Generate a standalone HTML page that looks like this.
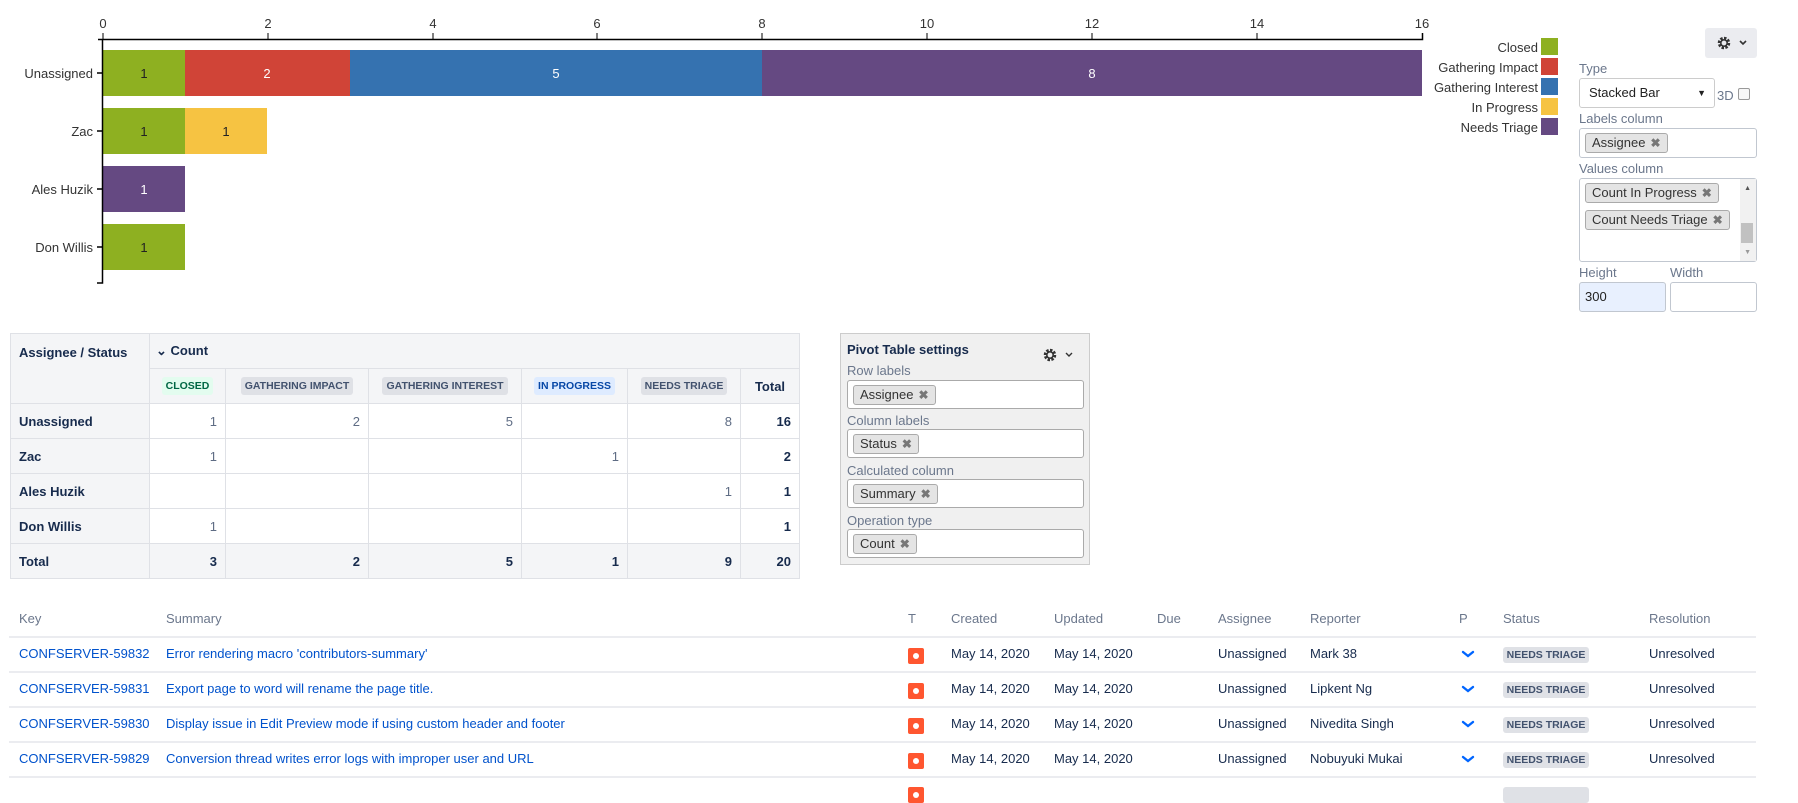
<!DOCTYPE html>
<html><head><meta charset="utf-8"><style>
*{box-sizing:border-box;margin:0;padding:0}
body{width:1798px;height:788px;overflow:hidden;background:#fff;font-family:"Liberation Sans",sans-serif;color:#172b4d;position:relative}
.a{position:absolute}
.lbl{position:absolute;font-size:13px;color:#6b778c}
.inp{position:absolute;border:1px solid #c1c7d0;border-radius:3px;background:#fff}
.tag{position:absolute;top:4px;left:5px;height:20px;border:1px solid #aaa;border-radius:3px;background:#e4e4e4;font-size:13px;line-height:18px;padding:0 6px;color:#333;white-space:nowrap}
.tag b{color:#777;margin-left:5px;font-size:12px}
table{border-collapse:collapse}
.pv td{border:1px solid #dfe1e6;font-size:13px;height:35px;padding:0 8px}
.pv .n{color:#5e6c84}
.lz{display:inline-block;font-size:10.5px;font-weight:bold;padding:3px 4px;border-radius:3px;background:#dfe1e6;color:#42526e;line-height:12px}
.hd{position:absolute;top:611px;font-size:13px;color:#6b778c}
.row{position:absolute;left:9px;width:1747px;height:2px;background:#ebecf0}
.c{position:absolute;font-size:13px;white-space:nowrap}
.k{color:#0052cc}
.ic{position:absolute;left:908px;width:16px;height:16px;background:#ff5630;border-radius:2px}
.ic:after{content:"";position:absolute;left:5px;top:5px;width:6px;height:6px;border-radius:50%;background:#fff}
.lzt{position:absolute;left:1503px;width:86px;height:16px;background:#dfe1e6;border-radius:3px;font-size:10.5px;font-weight:bold;color:#42526e;text-align:center;line-height:16px}
.pr{position:absolute;left:1461px}
</style></head><body>

<svg class="a" style="left:0;top:0" width="1560" height="300" font-family="Liberation Sans, sans-serif">
<g font-size="13" fill="#333" text-anchor="middle">
<text x="103" y="28">0</text><text x="268" y="28">2</text><text x="433" y="28">4</text><text x="597" y="28">6</text><text x="762" y="28">8</text><text x="927" y="28">10</text><text x="1092" y="28">12</text><text x="1257" y="28">14</text><text x="1422" y="28">16</text>
</g>
<path d="M98 39.5H1422.5V33" stroke="#000" fill="none" stroke-width="1.5"/>
<path d="M103 33V39M268 33V39M433 33V39M597 33V39M762 33V39M927 33V39M1092 33V39M1257 33V39" stroke="#000"/>
<rect x="103" y="50" width="82" height="46" fill="#8eb021"/>
<rect x="185" y="50" width="165" height="46" fill="#d04437"/>
<rect x="350" y="50" width="412" height="46" fill="#3572b0"/>
<rect x="762" y="50" width="660" height="46" fill="#654982"/>
<rect x="103" y="108" width="82" height="46" fill="#8eb021"/>
<rect x="185" y="108" width="82" height="46" fill="#f6c342"/>
<rect x="103" y="166" width="82" height="46" fill="#654982"/>
<rect x="103" y="224" width="82" height="46" fill="#8eb021"/>
<g font-size="13" text-anchor="middle">
<text x="144" y="78" fill="#222">1</text><text x="267" y="78" fill="#fff">2</text><text x="556" y="78" fill="#fff">5</text><text x="1092" y="78" fill="#fff">8</text>
<text x="144" y="136" fill="#222">1</text><text x="226" y="136" fill="#222">1</text>
<text x="144" y="194" fill="#fff">1</text><text x="144" y="252" fill="#222">1</text>
</g>
<path d="M102.5 39V283H97M97 73H103M97 131H103M97 189H103M97 247H103" stroke="#000" fill="none" stroke-width="1.5"/>
<g font-size="13" fill="#333" text-anchor="end">
<text x="93" y="78">Unassigned</text><text x="93" y="136">Zac</text><text x="93" y="194">Ales Huzik</text><text x="93" y="252">Don Willis</text>
</g>
<g font-size="13" fill="#333" text-anchor="end">
<text x="1538" y="52">Closed</text><text x="1538" y="72">Gathering Impact</text><text x="1538" y="92">Gathering Interest</text><text x="1538" y="112">In Progress</text><text x="1538" y="132">Needs Triage</text>
</g>
<rect x="1541" y="38" width="17" height="17" fill="#8eb021"/>
<rect x="1541" y="58" width="17" height="17" fill="#d04437"/>
<rect x="1541" y="78" width="17" height="17" fill="#3572b0"/>
<rect x="1541" y="98" width="17" height="17" fill="#f6c342"/>
<rect x="1541" y="118" width="17" height="17" fill="#654982"/>
</svg>

<div class="a" style="left:1705px;top:28px;width:52px;height:30px;background:#ebecf0;border-radius:3px"></div>
<svg class="a" style="left:1716px;top:34px" width="36" height="18"><circle cx="8" cy="9" r="5" fill="none" stroke="#333" stroke-width="2.5" stroke-dasharray="2.5 1.4"/><circle cx="8" cy="9" r="3.2" fill="none" stroke="#333" stroke-width="1.6"/><path d="M24 7l3 3 3-3" stroke="#333" stroke-width="1.6" fill="none"/></svg>
<div class="lbl" style="left:1579px;top:61px">Type</div>
<div class="inp" style="left:1579px;top:78px;width:136px;height:30px;border-color:#ccc;font-size:13px;line-height:28px;padding-left:9px;color:#222">Stacked Bar<span class="a" style="right:8px;top:0;font-size:9px">▼</span></div>
<div class="a" style="left:1717px;top:88px;font-size:13px;color:#6b778c">3D</div>
<div class="a" style="left:1738px;top:88px;width:12px;height:12px;border:1px solid #999;border-radius:2px;background:#f7f7f7"></div>
<div class="lbl" style="left:1579px;top:111px">Labels column</div>
<div class="inp" style="left:1579px;top:128px;width:178px;height:30px"><div class="tag">Assignee<b>✖</b></div></div>
<div class="lbl" style="left:1579px;top:161px">Values column</div>
<div class="inp" style="left:1579px;top:178px;width:178px;height:84px">
<div class="tag" style="top:4px">Count In Progress<b>✖</b></div>
<div class="tag" style="top:31px">Count Needs Triage<b>✖</b></div>
<div class="a" style="right:0;top:0;width:16px;height:82px;background:#f1f1f1"></div>
<div class="a" style="right:3px;top:44px;width:12px;height:20px;background:#c1c1c1"></div>
<div class="a" style="right:5px;top:6px;font-size:7px;color:#555">▲</div>
<div class="a" style="right:5px;top:70px;font-size:7px;color:#999">▼</div>
</div>
<div class="lbl" style="left:1579px;top:265px">Height</div>
<div class="lbl" style="left:1670px;top:265px">Width</div>
<div class="inp" style="left:1579px;top:282px;width:87px;height:30px;background:#e8f0fe;font-size:13px;line-height:28px;padding-left:5px;color:#222">300</div>
<div class="inp" style="left:1670px;top:282px;width:87px;height:30px"></div>

<table class="pv a" style="left:10px;top:333px;width:790px">
<tr style="background:#f4f5f7"><td rowspan="2" style="width:139px;font-weight:bold;vertical-align:top;padding-top:11px">Assignee / Status</td><td colspan="6" style="font-weight:bold;padding-left:6px">⌄ Count</td></tr>
<tr style="background:#f4f5f7;text-align:center"><td style="width:76px"><span class="lz" style="background:#e3fcef;color:#006644">CLOSED</span></td><td style="width:143px"><span class="lz">GATHERING IMPACT</span></td><td style="width:153px"><span class="lz">GATHERING INTEREST</span></td><td style="width:106px"><span class="lz" style="background:#deebff;color:#0747a6">IN PROGRESS</span></td><td style="width:113px"><span class="lz">NEEDS TRIAGE</span></td><td style="font-weight:bold">Total</td></tr>
<tr style="text-align:right"><td style="text-align:left;font-weight:bold;background:#f4f5f7">Unassigned</td><td class="n">1</td><td class="n">2</td><td class="n">5</td><td></td><td class="n">8</td><td><b>16</b></td></tr>
<tr style="text-align:right"><td style="text-align:left;font-weight:bold;background:#f4f5f7">Zac</td><td class="n">1</td><td></td><td></td><td class="n">1</td><td></td><td><b>2</b></td></tr>
<tr style="text-align:right"><td style="text-align:left;font-weight:bold;background:#f4f5f7">Ales Huzik</td><td></td><td></td><td></td><td></td><td class="n">1</td><td><b>1</b></td></tr>
<tr style="text-align:right"><td style="text-align:left;font-weight:bold;background:#f4f5f7">Don Willis</td><td class="n">1</td><td></td><td></td><td></td><td></td><td><b>1</b></td></tr>
<tr style="text-align:right;background:#f4f5f7;font-weight:bold"><td style="text-align:left">Total</td><td>3</td><td>2</td><td>5</td><td>1</td><td>9</td><td>20</td></tr>
</table>

<div class="a" style="left:840px;top:333px;width:250px;height:232px;background:#f0f0f0;border:1px solid #ccc"></div>
<div class="a" style="left:847px;top:342px;font-size:13px;font-weight:bold">Pivot Table settings</div>
<svg class="a" style="left:1042px;top:346px" width="36" height="18"><circle cx="8" cy="9" r="5" fill="none" stroke="#333" stroke-width="2.5" stroke-dasharray="2.5 1.4"/><circle cx="8" cy="9" r="3.2" fill="none" stroke="#333" stroke-width="1.6"/><path d="M24 7l3 3 3-3" stroke="#333" stroke-width="1.4" fill="none"/></svg>
<div class="lbl" style="left:847px;top:363px">Row labels</div>
<div class="inp" style="left:847px;top:380px;width:237px;height:29px;border-color:#aaa"><div class="tag">Assignee<b>✖</b></div></div>
<div class="lbl" style="left:847px;top:413px">Column labels</div>
<div class="inp" style="left:847px;top:429px;width:237px;height:29px;border-color:#aaa"><div class="tag">Status<b>✖</b></div></div>
<div class="lbl" style="left:847px;top:463px">Calculated column</div>
<div class="inp" style="left:847px;top:479px;width:237px;height:29px;border-color:#aaa"><div class="tag">Summary<b>✖</b></div></div>
<div class="lbl" style="left:847px;top:513px">Operation type</div>
<div class="inp" style="left:847px;top:529px;width:237px;height:29px;border-color:#aaa"><div class="tag">Count<b>✖</b></div></div>

<div class="hd" style="left:19px">Key</div><div class="hd" style="left:166px">Summary</div><div class="hd" style="left:908px">T</div><div class="hd" style="left:951px">Created</div><div class="hd" style="left:1054px">Updated</div><div class="hd" style="left:1157px">Due</div><div class="hd" style="left:1218px">Assignee</div><div class="hd" style="left:1310px">Reporter</div><div class="hd" style="left:1459px">P</div><div class="hd" style="left:1503px">Status</div><div class="hd" style="left:1649px">Resolution</div>
<div class="row" style="top:636px"></div>
<div class="row" style="top:671px"></div>
<div class="row" style="top:706px"></div>
<div class="row" style="top:741px"></div>
<div class="row" style="top:776px"></div>

<div class="c k" style="left:19px;top:646px">CONFSERVER-59832</div><div class="c k" style="left:166px;top:646px">Error rendering macro 'contributors-summary'</div><div class="ic" style="top:648px"></div><div class="c" style="left:951px;top:646px">May 14, 2020</div><div class="c" style="left:1054px;top:646px">May 14, 2020</div><div class="c" style="left:1218px;top:646px">Unassigned</div><div class="c" style="left:1310px;top:646px">Mark 38</div><svg class="pr" style="top:650px" width="14" height="8"><path d="M2 2l5 4 5-4" stroke="#0065ff" stroke-width="2.4" fill="none" stroke-linecap="round"/></svg><div class="lzt" style="top:647px">NEEDS TRIAGE</div><div class="c" style="left:1649px;top:646px">Unresolved</div>

<div class="c k" style="left:19px;top:681px">CONFSERVER-59831</div><div class="c k" style="left:166px;top:681px">Export page to word will rename the page title.</div><div class="ic" style="top:683px"></div><div class="c" style="left:951px;top:681px">May 14, 2020</div><div class="c" style="left:1054px;top:681px">May 14, 2020</div><div class="c" style="left:1218px;top:681px">Unassigned</div><div class="c" style="left:1310px;top:681px">Lipkent Ng</div><svg class="pr" style="top:685px" width="14" height="8"><path d="M2 2l5 4 5-4" stroke="#0065ff" stroke-width="2.4" fill="none" stroke-linecap="round"/></svg><div class="lzt" style="top:682px">NEEDS TRIAGE</div><div class="c" style="left:1649px;top:681px">Unresolved</div>

<div class="c k" style="left:19px;top:716px">CONFSERVER-59830</div><div class="c k" style="left:166px;top:716px">Display issue in Edit Preview mode if using custom header and footer</div><div class="ic" style="top:718px"></div><div class="c" style="left:951px;top:716px">May 14, 2020</div><div class="c" style="left:1054px;top:716px">May 14, 2020</div><div class="c" style="left:1218px;top:716px">Unassigned</div><div class="c" style="left:1310px;top:716px">Nivedita Singh</div><svg class="pr" style="top:720px" width="14" height="8"><path d="M2 2l5 4 5-4" stroke="#0065ff" stroke-width="2.4" fill="none" stroke-linecap="round"/></svg><div class="lzt" style="top:717px">NEEDS TRIAGE</div><div class="c" style="left:1649px;top:716px">Unresolved</div>

<div class="c k" style="left:19px;top:751px">CONFSERVER-59829</div><div class="c k" style="left:166px;top:751px">Conversion thread writes error logs with improper user and URL</div><div class="ic" style="top:753px"></div><div class="c" style="left:951px;top:751px">May 14, 2020</div><div class="c" style="left:1054px;top:751px">May 14, 2020</div><div class="c" style="left:1218px;top:751px">Unassigned</div><div class="c" style="left:1310px;top:751px">Nobuyuki Mukai</div><svg class="pr" style="top:755px" width="14" height="8"><path d="M2 2l5 4 5-4" stroke="#0065ff" stroke-width="2.4" fill="none" stroke-linecap="round"/></svg><div class="lzt" style="top:752px">NEEDS TRIAGE</div><div class="c" style="left:1649px;top:751px">Unresolved</div>

<div class="ic" style="top:787px"></div><div class="lzt" style="top:787px"></div>
</body></html>
